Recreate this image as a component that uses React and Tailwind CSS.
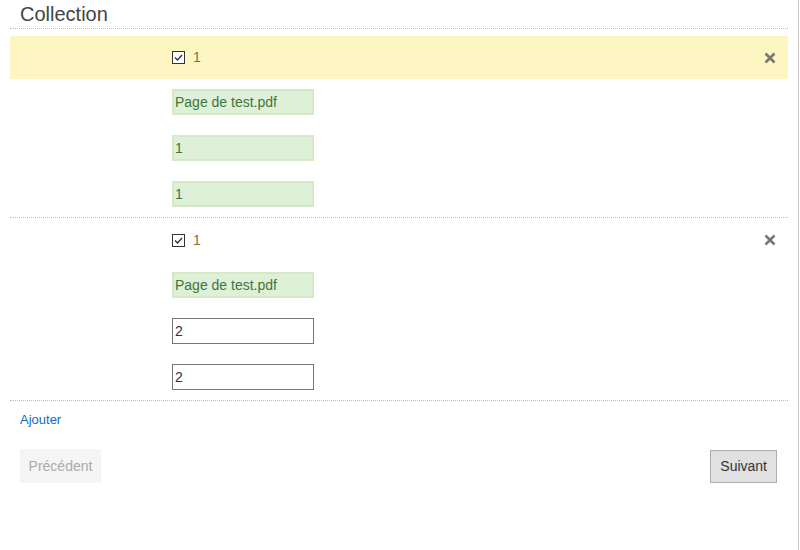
const font = { fontFamily: '"Liberation Sans", Arial, sans-serif' }

function Field({ value, ok }) {
  return (
    <div className="pl-[162px] mt-[20px] first:mt-0">
      <div
        className={
          ok
            ? 'w-[142px] h-[26px] border-2 border-[#d6e9c6] bg-[#dff0d8] text-[#3c763d] text-[14px] leading-[22px] pl-[1px]'
            : 'w-[142px] h-[26px] border border-[#767676] bg-white text-[#333] text-[14px] leading-[24px] pl-[2px]'
        }
      >
        {value}
      </div>
    </div>
  )
}

function Check() {
  return (
    <svg width="13" height="13" viewBox="0 0 13 13" className="shrink-0">
      <rect x="0.5" y="0.5" width="12" height="12" fill="white" stroke="#333" />
      <path d="M3 6.5 L5.5 9 L10 4" fill="none" stroke="#333" strokeWidth="1.4" />
    </svg>
  )
}

function Close() {
  return (
    <svg width="12" height="12" viewBox="0 0 12 12" className="ml-auto mr-[6px] shrink-0">
      <path d="M1.5 1.5 L10.5 10.5 M10.5 1.5 L1.5 10.5" stroke="#777" strokeWidth="2.6" />
    </svg>
  )
}

function Item({ highlight, rowH, fields }) {
  return (
    <div className="border-b border-dotted border-[#bbb] pb-[10px]">
      <div className={`${rowH} flex items-center pl-[162px] pr-[6px] ${highlight ? 'bg-[#fdf6c3]' : ''}`}>
        <Check />
        <span className="ml-[8px] text-[14px] text-[#8a6d3b]">1</span>
        <Close />
      </div>
      <div className="mt-[10px] flex flex-col">
        {fields.map((f, i) => (
          <Field key={i} value={f.value} ok={f.ok} />
        ))}
      </div>
    </div>
  )
}

export default function App() {
  return (
    <div className="w-[799px] h-[550px] border-r border-[#ccc] bg-white" style={font}>
      <div className="ml-[10px] w-[778px]">
        <div className="border-b border-dotted border-[#bbb] h-[29px] pl-[10px]">
          <h1 className="text-[20px] leading-[28px] text-[#444]">Collection</h1>
        </div>
        <div className="mt-[7px]">
          <Item
            highlight
            rowH="h-[43px]"
            fields={[
              { value: 'Page de test.pdf', ok: true },
              { value: '1', ok: true },
              { value: '1', ok: true },
            ]}
          />
          <Item
            rowH="h-[44px]"
            fields={[
              { value: 'Page de test.pdf', ok: true },
              { value: '2', ok: false },
              { value: '2', ok: false },
            ]}
          />
        </div>
        <div className="pl-[10px] pt-[6px]">
          <a className="text-[13px] text-[#0b6bc7]">Ajouter</a>
        </div>
        <div className="flex justify-between items-center pl-[10px] pr-[11px] mt-[18px]">
          <button className="h-[34px] px-[8px] w-[81px] bg-[#f5f5f5] text-[#aaa] text-[14px]">Précédent</button>
          <button className="h-[33px] px-[9px] bg-[#e1e1e1] border border-[#adadad] text-[#333] text-[14px]">Suivant</button>
        </div>
      </div>
    </div>
  )
}
